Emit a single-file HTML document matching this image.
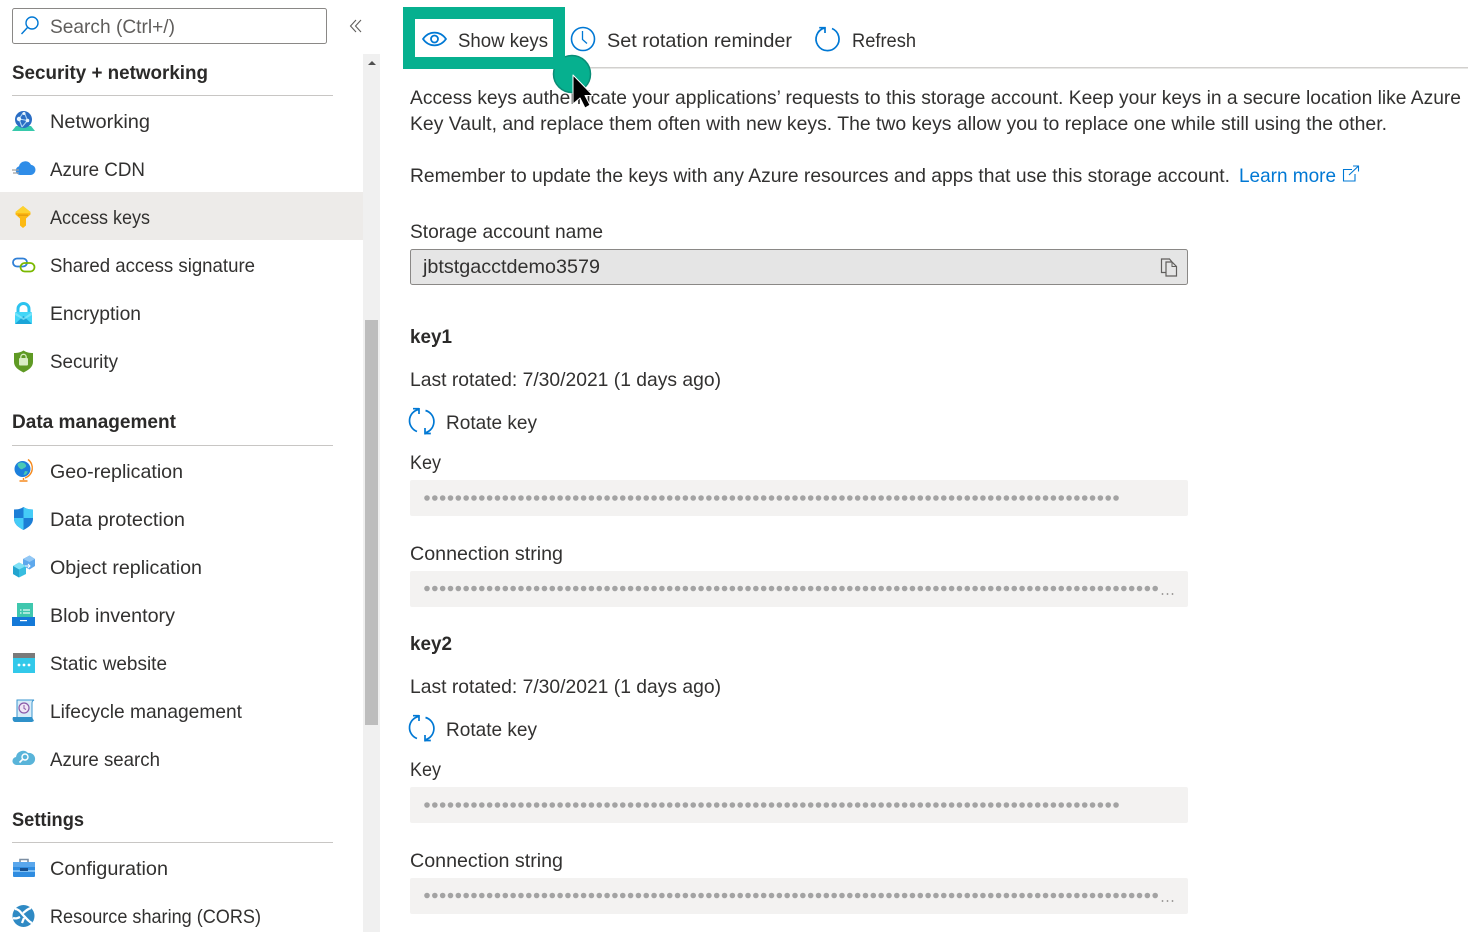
<!DOCTYPE html>
<html lang="en">
<head>
<meta charset="utf-8">
<title>Access keys</title>
<style>
html,body{margin:0;padding:0;background:#fff;width:1468px;height:932px;overflow:hidden}
svg{display:block}
text{font-family:"Liberation Sans",sans-serif;font-size:19.5px;fill:#323130}
.b{font-weight:700;font-size:19px;fill:#2b2a29}
.dots{stroke:#a3a3a3;stroke-width:5.600;stroke-linecap:round;stroke-dasharray:0 7.83;fill:none}
.ro{fill:none;stroke:#0078d4;stroke-width:1.700}
</style>
</head>
<body>
<svg width="1468" height="932" viewBox="0 0 1468 932" xmlns="http://www.w3.org/2000/svg">
<rect width="1468" height="932" fill="#fff"/>

<!-- Sidebar -->
<rect x="12.5" y="8.5" width="314" height="35" rx="2" fill="#fff" stroke="#8a8886"/>
<g fill="none" stroke="#0078d4" stroke-width="1.4"><circle cx="32" cy="23" r="6"/><path d="M27.500 27.500L21.500 34"/></g>
<text x="50" y="33" textLength="125" lengthAdjust="spacingAndGlyphs" style="fill:#605e5c">Search (Ctrl+/)</text>
<path d="M356 20l-5.500 6 5.500 6M361 20l-5.500 6 5.500 6" fill="none" stroke="#605e5c" stroke-width="1.100"/>

<rect x="363" y="54" width="17" height="878" fill="#f0f0f0"/>
<rect x="365" y="320" width="13" height="405" fill="#bdbdbd"/>
<path d="M368 65l4-4 4 4z" fill="#505050"/>
<rect x="0" y="192" width="363" height="48" fill="#edebe9"/>

<text class="b" x="12" y="79" textLength="196" lengthAdjust="spacingAndGlyphs">Security + networking</text>
<rect x="12" y="95" width="321" height="1" fill="#c8c6c4"/>
<text x="50" y="128" textLength="100" lengthAdjust="spacingAndGlyphs">Networking</text>
<text x="50" y="176" textLength="95" lengthAdjust="spacingAndGlyphs">Azure CDN</text>
<text x="50" y="224" textLength="100" lengthAdjust="spacingAndGlyphs">Access keys</text>
<text x="50" y="272" textLength="205" lengthAdjust="spacingAndGlyphs">Shared access signature</text>
<text x="50" y="320" textLength="91" lengthAdjust="spacingAndGlyphs">Encryption</text>
<text x="50" y="368" textLength="68" lengthAdjust="spacingAndGlyphs">Security</text>

<text class="b" x="12" y="428" textLength="164" lengthAdjust="spacingAndGlyphs">Data management</text>
<rect x="12" y="445" width="321" height="1" fill="#c8c6c4"/>
<text x="50" y="478" textLength="133" lengthAdjust="spacingAndGlyphs">Geo-replication</text>
<text x="50" y="526" textLength="135" lengthAdjust="spacingAndGlyphs">Data protection</text>
<text x="50" y="574" textLength="152" lengthAdjust="spacingAndGlyphs">Object replication</text>
<text x="50" y="622" textLength="125" lengthAdjust="spacingAndGlyphs">Blob inventory</text>
<text x="50" y="670" textLength="117" lengthAdjust="spacingAndGlyphs">Static website</text>
<text x="50" y="718" textLength="192" lengthAdjust="spacingAndGlyphs">Lifecycle management</text>
<text x="50" y="766" textLength="110" lengthAdjust="spacingAndGlyphs">Azure search</text>

<text class="b" x="12" y="826" textLength="72" lengthAdjust="spacingAndGlyphs">Settings</text>
<rect x="12" y="842" width="321" height="1" fill="#c8c6c4"/>
<text x="50" y="875" textLength="118" lengthAdjust="spacingAndGlyphs">Configuration</text>
<text x="50" y="923" textLength="211" lengthAdjust="spacingAndGlyphs">Resource sharing (CORS)</text>

<!-- Sidebar icons -->
<!-- Networking -->
<path d="M16 126h15l4 5H12z" fill="#37c9ab"/>
<circle cx="23.500" cy="119.500" r="8.500" fill="#2a6dc4"/>
<path d="M19 119l8.500 1.500M19 119l4-6M27.500 120.500l-3-7.500M22 127l-3-8M22 127l5.500-6.500" stroke="#a9d4f5" stroke-width="1.100" fill="none"/>
<circle cx="19" cy="119" r="2.200" fill="#eaf5fd"/><circle cx="27.500" cy="120.500" r="1.800" fill="#eaf5fd"/><circle cx="24" cy="113.500" r="1.500" fill="#eaf5fd"/>
<!-- CDN -->
<path d="M20 175a4.500 4.500 0 0 1-1-8.800 6.500 6.500 0 0 1 12-1.500 5.200 5.200 0 0 1 0 10.300z" fill="#2f8de8"/>
<path d="M12 170h7M13 173h6" stroke="#a0a0a0" stroke-width="1.200"/>
<!-- Key -->
<path d="M23 206l7.500 6v2.500l-4.500 4v7l-3 2.500-3-2.500v-7l-4.500-4V212z" fill="#fcb913"/>
<path d="M23 206l7.500 6v1H15.500v-1z" fill="#fdd22f"/>
<rect x="18" y="214.500" width="10" height="1.300" fill="#e39a0b"/>
<!-- SAS -->
<rect x="13" y="258.500" width="14" height="8" rx="4" fill="none" stroke="#2f7fd6" stroke-width="1.800"/>
<rect x="20.500" y="263" width="14" height="8.500" rx="4.200" fill="none" stroke="#7ab800" stroke-width="1.800"/>
<!-- Encryption -->
<path d="M18 313v-4a5.500 5.500 0 0 1 11 0v4" fill="none" stroke="#2cc3ef" stroke-width="3"/>
<rect x="15" y="312" width="17" height="12" rx="1" fill="#42d6f7"/>
<path d="M15 324l8.500-8 8.500 8z" fill="#1ba5d8"/><path d="M15 312l8.500 6 8.500-6v3l-8.500 5-8.500-5z" fill="#8ce8fb" opacity=".7"/>
<!-- Security -->
<path d="M23.500 350.500c3 2 6 2.500 9.500 2.500v9c0 5-4.500 8-9.500 10.500-5-2.500-9.500-5.500-9.500-10.500v-9c3.500 0 6.500-.5 9.500-2.500z" fill="#5f9a24"/>
<rect x="19" y="358" width="9" height="7.500" rx="1" fill="#d9edc4"/>
<path d="M20.800 358.500v-1.500a2.700 2.700 0 0 1 5.400 0v1.500" fill="none" stroke="#d9edc4" stroke-width="1.300"/>
<!-- Geo -->
<circle cx="22.500" cy="469" r="8" fill="#1c7fdc"/>
<path d="M19 463c3-1.500 6 0 7 2s-2 3-3.500 4-3.500-1-4.500-3 0-2.500 1-3zM25 471l3 .500-2 3-2.500.500z" fill="#4bc9b5"/>
<path d="M28 459.500a10.500 10.500 0 0 1-3 18.500" fill="none" stroke="#f58a1f" stroke-width="1.400"/>
<path d="M23.500 478v2M19.500 481h8" stroke="#f58a1f" stroke-width="1.400"/>
<!-- Data protection -->
<path d="M23.500 507c3 2 6 2.500 9.500 2.500v9.500c0 5-4.500 8.500-9.500 11-5-2.500-9.500-6-9.500-11v-9.500c3.500 0 6.500-.5 9.500-2.500z" fill="#1c7ed6"/>
<path d="M23.500 507c3 2 6 2.500 9.500 2.500V518h-9.500zM14 518h9.500v12c-5-2.500-9.500-6-9.500-12z" fill="#45ccf7"/>
<!-- Object replication -->
<path d="M23 559l6.500-3.500 5.500 3.500v7l-5.500 3.500-6.500-3.500z" fill="#5ea8ec"/>
<path d="M23 559l6.500 3 5.500-3-5.500-3.500z" fill="#93c8f5"/>
<path d="M13 566l6-3.500 7 3.500v8l-7 3.500-6-3.500z" fill="#38bde0"/>
<path d="M13 566l6 3.500 7-3.500-7-3.500z" fill="#7fe0f5"/>
<path d="M19 569.500v8l-6-3.500v-8z" fill="#22a4cf"/>
<path d="M25 566h5M28 564l2 2-2 2" stroke="#fff" stroke-width="1" fill="none"/>
<!-- Blob inventory -->
<rect x="17" y="603" width="16" height="17" fill="#3fc7ae"/>
<path d="M20 610h1.500M23 610h7M20 613h1.500M23 613h7" stroke="#e8fbf6" stroke-width="1.200"/>
<rect x="12" y="617" width="23" height="9" fill="#1479d8"/>
<rect x="20" y="620" width="7" height="1.200" fill="#fff"/>
<!-- Static website -->
<rect x="13" y="653" width="22" height="20" fill="#32c9ea"/>
<rect x="13" y="653" width="22" height="5" fill="#7a7a7a"/>
<circle cx="19" cy="665" r="1.400" fill="#fff"/><circle cx="24" cy="665" r="1.400" fill="#fff"/><circle cx="29" cy="665" r="1.400" fill="#fff"/>
<!-- Lifecycle -->
<path d="M17 700h17c-2 1-2 2-2 4v15H17z" fill="#d8ecf8" stroke="#3a96cf" stroke-width="1"/>
<path d="M13 717h19l2 4-2 1H15c-2 0-3-3-2-5z" fill="#2f91c9"/>
<circle cx="24" cy="708" r="5" fill="#f0e6f5" stroke="#8a5aa8" stroke-width="1.200"/>
<path d="M24 705v3.500l2 1" fill="none" stroke="#8a5aa8" stroke-width="1"/>
<!-- Azure search -->
<path d="M17 765a4 4 0 0 1-1-8 7 7 0 0 1 12-4 6 6 0 0 1 2 12z" fill="#59b4d9"/>
<circle cx="25" cy="757" r="3" fill="none" stroke="#fff" stroke-width="1.400"/>
<path d="M22.500 759.500L19.500 762.500" stroke="#fff" stroke-width="1.600"/>
<!-- Config -->
<path d="M20 863v-3.500h8v3.500" fill="none" stroke="#7d8fa3" stroke-width="1.600"/>
<rect x="13" y="862" width="22" height="15" rx="1" fill="#2f8ce0"/>
<rect x="13" y="862" width="22" height="5" fill="#5aa7ec"/>
<rect x="13" y="870" width="22" height="2" fill="#7fc0f5"/>
<rect x="20" y="868" width="8" height="3" fill="#17508f"/>
<!-- CORS -->
<circle cx="23.500" cy="916" r="11" fill="#2f8ac4"/>
<path d="M15 909c4 0 6 4 9 7s5 6 8 7M31 908c-4 1-5 3-8 5M13 918c3 1 5 0 7-1M22 923l2-5" fill="none" stroke="#fff" stroke-width="2.300"/>

<!-- Main text -->
<text x="410" y="104" textLength="1051" lengthAdjust="spacingAndGlyphs">Access keys authenticate your applications’ requests to this storage account. Keep your keys in a secure location like Azure</text>
<text x="410" y="130" textLength="977" lengthAdjust="spacingAndGlyphs">Key Vault, and replace them often with new keys. The two keys allow you to replace one while still using the other.</text>
<text x="410" y="182" textLength="820" lengthAdjust="spacingAndGlyphs">Remember to update the keys with any Azure resources and apps that use this storage account.</text>
<text x="1239" y="182" textLength="97" lengthAdjust="spacingAndGlyphs" style="fill:#0078d4">Learn more</text>
<path d="M1352 169.500h-8.500v11.500h11.500v-7M1349 175l9.500-9M1353 166h5.500v5.500" fill="none" stroke="#0078d4" stroke-width="1.100"/>

<text x="410" y="238" textLength="193" lengthAdjust="spacingAndGlyphs">Storage account name</text>
<rect x="410.500" y="249.500" width="777" height="35" rx="2" fill="#e5e5e5" stroke="#8a8886"/>
<text x="423" y="273" textLength="177" lengthAdjust="spacingAndGlyphs">jbtstgacctdemo3579</text>
<path d="M1166 272.500h-4.500V259h8l2.500 3M1166 262h6l4.500 4.500v9.500H1166z" fill="none" stroke="#605e5c" stroke-width="1.200"/>
<path d="M1172 262v4.500h4.500" fill="none" stroke="#605e5c" stroke-width="1"/>

<!-- key1 -->
<text class="b" x="410" y="343" textLength="42" lengthAdjust="spacingAndGlyphs">key1</text>
<text x="410" y="386" textLength="311" lengthAdjust="spacingAndGlyphs">Last rotated: 7/30/2021 (1 days ago)</text>
<path class="ro" d="M417 431.500A11.500 11.500 0 0 1 418.500 409.500M425.500 410.500A11.500 11.500 0 0 1 426 432.500M419 408v6M419 408.700h-6M425 434.500v-6.500M424.300 433.500h6.500"/>
<text x="446" y="429" textLength="91" lengthAdjust="spacingAndGlyphs">Rotate key</text>
<text x="410" y="469" textLength="31" lengthAdjust="spacingAndGlyphs">Key</text>
<rect x="410" y="480" width="778" height="36" rx="2" fill="#f3f2f1"/>
<path class="dots" d="M427 498H1118"/>
<text x="410" y="560" textLength="153" lengthAdjust="spacingAndGlyphs">Connection string</text>
<rect x="410" y="571" width="778" height="36" rx="2" fill="#f3f2f1"/>
<path class="dots" d="M427 588.500H1158"/>
<circle cx="1162.500" cy="594" r=".9" fill="#8a8886"/><circle cx="1167.500" cy="594" r=".9" fill="#8a8886"/><circle cx="1172.500" cy="594" r=".9" fill="#8a8886"/>

<!-- key2 -->
<text class="b" x="410" y="650" textLength="42" lengthAdjust="spacingAndGlyphs">key2</text>
<text x="410" y="693" textLength="311" lengthAdjust="spacingAndGlyphs">Last rotated: 7/30/2021 (1 days ago)</text>
<path class="ro" d="M417 738.500A11.500 11.500 0 0 1 418.500 716.500M425.500 717.500A11.500 11.500 0 0 1 426 739.500M419 715v6M419 715.700h-6M425 741.500v-6.500M424.300 740.500h6.500"/>
<text x="446" y="736" textLength="91" lengthAdjust="spacingAndGlyphs">Rotate key</text>
<text x="410" y="776" textLength="31" lengthAdjust="spacingAndGlyphs">Key</text>
<rect x="410" y="787" width="778" height="36" rx="2" fill="#f3f2f1"/>
<path class="dots" d="M427 805H1118"/>
<text x="410" y="867" textLength="153" lengthAdjust="spacingAndGlyphs">Connection string</text>
<rect x="410" y="878" width="778" height="36" rx="2" fill="#f3f2f1"/>
<path class="dots" d="M427 895.500H1158"/>
<circle cx="1162.500" cy="901" r=".9" fill="#8a8886"/><circle cx="1167.500" cy="901" r=".9" fill="#8a8886"/><circle cx="1172.500" cy="901" r=".9" fill="#8a8886"/>

<!-- Toolbar -->
<rect x="565" y="67" width="903" height="1.500" fill="#d2d0ce"/>
<path d="M423 39c6-8.500 17-8.500 23 0-6 8.500-17 8.500-23 0z" fill="none" stroke="#0078d4" stroke-width="1.700"/>
<circle cx="434.500" cy="39" r="3.500" fill="none" stroke="#0078d4" stroke-width="1.800"/>
<text x="458" y="47" textLength="90" lengthAdjust="spacingAndGlyphs">Show keys</text>
<circle cx="583" cy="39" r="11.500" fill="none" stroke="#0078d4" stroke-width="1.600"/>
<path d="M582.500 31v8.500l4.500 4" fill="none" stroke="#0078d4" stroke-width="1.300"/>
<text x="607" y="47" textLength="185" lengthAdjust="spacingAndGlyphs">Set rotation reminder</text>
<path class="ro" d="M832 28.500A11.500 11.500 0 1 1 824.500 28M825 27v6M825.700 27.700h-6.500"/>
<text x="852" y="47" textLength="64" lengthAdjust="spacingAndGlyphs">Refresh</text>

<!-- Highlight callout -->
<circle cx="572" cy="74" r="18.500" fill="#06b08f" stroke="#0a8d76" stroke-width="1.500"/>
<path d="M403 7h162v62H403zM415 19v38h138V19z" fill="#06b08f" fill-rule="evenodd"/>
<path d="M573 75v29l7-6 5 10 5-3-5-9.500h8z" fill="#000" stroke="#fff" stroke-width="1" stroke-linejoin="round"/>
</svg>
</body>
</html>
